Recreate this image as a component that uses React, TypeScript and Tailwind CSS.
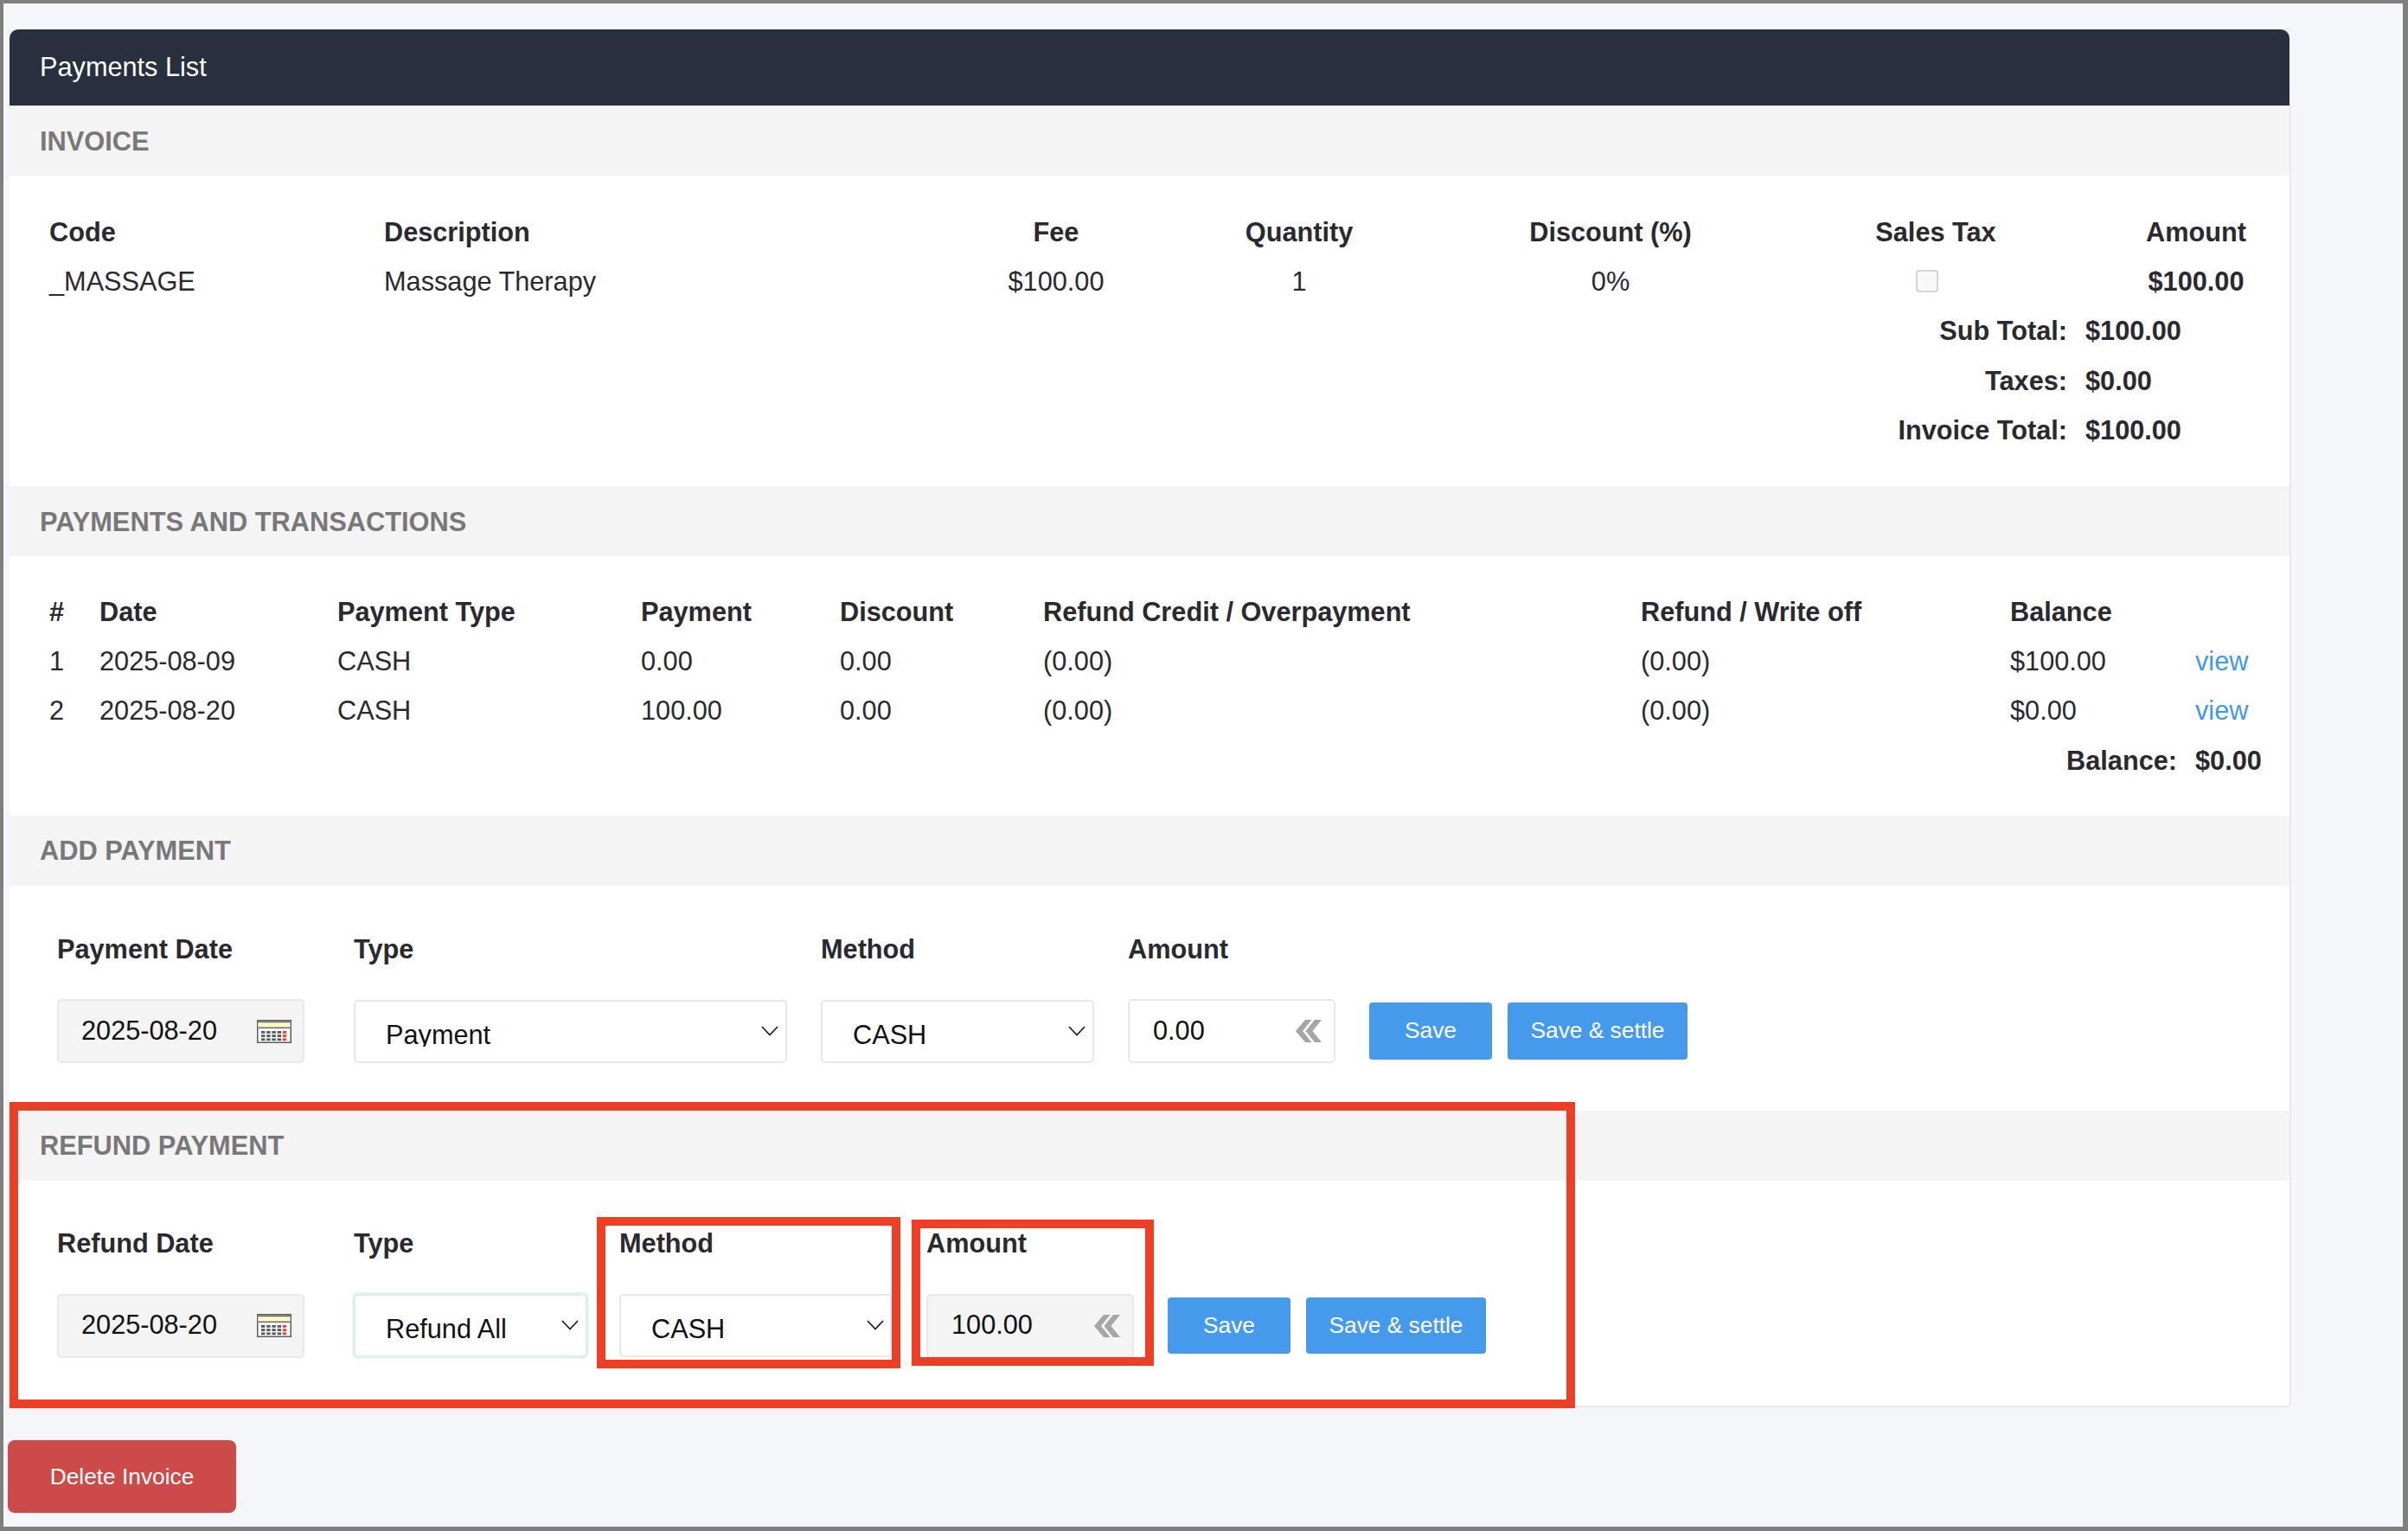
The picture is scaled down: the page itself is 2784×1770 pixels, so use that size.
const INVOICE_COLS = "grid grid-cols-[387px_702px_150px_412px_308px_444px_158px] h-[57.4px] items-center";
const PAYMENT_COLS = "grid grid-cols-[58px_275px_351px_230px_235px_691px_427px_214px_90px] h-[57.4px] items-center";

function SectionTitle({ children }: { children: string }) {
  return (
    <div className="h-[81px] bg-[#f4f4f4] pl-[35px] pt-[3px] flex items-center text-[30.800px] font-bold text-[#787878]">
      {children}
    </div>
  );
}

function CalendarIcon() {
  const cells = [];
  for (let row = 0; row < 3; row++) {
    for (let col = 0; col < 5; col++) {
      cells.push(
        <rect
          key={`${row}-${col}`}
          x={5 + col * 6.2}
          y={13 + row * 4.2}
          width="4.4"
          height="2.8"
          fill={col === 4 ? "#e8413c" : "#55585c"}
        />
      );
    }
  }
  return (
    <svg width="40" height="27" viewBox="0 0 40 27" className="shrink-0">
      <rect x="0.75" y="0.75" width="38.5" height="25.5" fill="#fff" stroke="#5b5d60" strokeWidth="1.5" />
      <rect x="1.5" y="1.5" width="37" height="2" fill="#6a6b6c" />
      <rect x="1.5" y="3.5" width="37" height="5" fill="#fdfbc0" />
      <rect x="1.5" y="8.5" width="37" height="1.5" fill="#6a6b6c" />
      {cells}
    </svg>
  );
}

function Chevrons() {
  return (
    <svg width="30" height="26" viewBox="0 0 30 26" className="shrink-0">
      <path d="M11 0h7.500L8 13l10.500 13H11L0 13z" fill="#a6a6a6" />
      <path d="M22 0h8L19.500 13 30 26h-8L11.500 13z" fill="#a6a6a6" />
    </svg>
  );
}

function DateField({ value }: { value: string }) {
  return (
    <div className="w-[286px] h-[74px] bg-[#f4f4f4] border-2 border-[#e8e8e8] rounded-[5px] pl-[26px] pr-[13px] flex items-center justify-between text-[30.700px] text-[#111]">
      <span>{value}</span>
      <CalendarIcon />
    </div>
  );
}

function SelectField({ value, width, glow }: { value: string; width: string; glow?: boolean }) {
  return (
    <div
      className={`relative h-[73px] ${width} bg-white border-2 rounded-[5px] ${
        glow ? "border-[#dcefec] ring-2 ring-[#e6f3f1]" : "border-[#e8e8e8]"
      }`}
    >
      <select
        defaultValue={value}
        className="appearance-none w-full h-full bg-transparent pl-[35px] pt-[16px] pb-[17px] text-[30.700px] text-[#111] outline-none"
      >
        <option>{value}</option>
      </select>
      <svg
        width="20"
        height="12"
        viewBox="0 0 20 12"
        fill="none"
        className="absolute right-[8px] top-[28px] pointer-events-none"
      >
        <path d="M1 1l9 9.500L19 1" stroke="#222" strokeWidth="1.800" />
      </svg>
    </div>
  );
}

function AmountField({ value, readOnly }: { value: string; readOnly?: boolean }) {
  return (
    <div
      className={`w-[240px] h-[74px] border-2 border-[#e8e8e8] rounded-[5px] pl-[27px] pr-[14px] flex items-center justify-between text-[30.700px] text-[#111] ${
        readOnly ? "bg-[#f4f4f4]" : "bg-white"
      }`}
    >
      <span>{value}</span>
      <Chevrons />
    </div>
  );
}

function BlueButton({ children, width }: { children: string; width: string }) {
  return (
    <button className={`${width} bg-[#469aec] rounded-[4px] text-white text-[26.300px] flex items-center justify-center`}>
      {children}
    </button>
  );
}

function Label({ children, width }: { children: string; width: string }) {
  return <div className={`${width} text-[30.700px] font-bold text-[#2a2a2e] h-[36px] leading-[36px] mb-[39.500px]`}>{children}</div>;
}

export default function App() {
  return (
    <div className="relative w-[2784px] h-[1770px] overflow-hidden bg-[#f4f6fa] border-t-4 border-l-4 border-r-[6px] border-b-[5px] border-[#7f7f7f] font-['Liberation_Sans',Arial,sans-serif] text-[30.700px] text-[#2a2a2e]">
      <div className="ml-[7px] mt-[30px] w-[2638px]">
        <div className="w-[2636px] h-[88px] bg-[#28303f] rounded-t-[10px] pl-[35px] pt-[1px] flex items-center text-white text-[30.700px]">
          Payments List
        </div>
        <div className="bg-white border-r-2 border-b-2 border-[#e8eaee] rounded-b-[6px]">
          <SectionTitle>INVOICE</SectionTitle>
          <div className="pl-[46px] pt-[37px] pb-[35px]">
            <div className={`${INVOICE_COLS} font-bold`}>
              <span>Code</span>
              <span>Description</span>
              <span className="text-center">Fee</span>
              <span className="text-center">Quantity</span>
              <span className="text-center">Discount (%)</span>
              <span className="text-center">Sales Tax</span>
              <span className="text-center">Amount</span>
            </div>
            <div className={INVOICE_COLS}>
              <span>_MASSAGE</span>
              <span>Massage Therapy</span>
              <span className="text-center">$100.00</span>
              <span className="text-center">1</span>
              <span className="text-center">0%</span>
              <span className="flex justify-center">
                <input
                  type="checkbox"
                  disabled
                  className="appearance-none w-[26px] h-[26px] mr-[20px] mb-[3px] bg-[#f8f8f8] border-2 border-[#d6d6d6] rounded-[4px]"
                />
              </span>
              <span className="text-center font-bold">$100.00</span>
            </div>
            {[
              ["Sub Total:", "$100.00"],
              ["Taxes:", "$0.00"],
              ["Invoice Total:", "$100.00"],
            ].map(([label, value]) => (
              <div key={label} className="flex h-[57.4px] items-center font-bold">
                <span className="w-[2333px] text-right">{label}</span>
                <span className="ml-[21px]">{value}</span>
              </div>
            ))}
          </div>

          <SectionTitle>PAYMENTS AND TRANSACTIONS</SectionTitle>
          <div className="pl-[46px] pt-[36px] pb-[34px]">
            <div className={`${PAYMENT_COLS} font-bold`}>
              <span>#</span>
              <span>Date</span>
              <span>Payment Type</span>
              <span>Payment</span>
              <span>Discount</span>
              <span>Refund Credit / Overpayment</span>
              <span>Refund / Write off</span>
              <span>Balance</span>
              <span />
            </div>
            {[
              ["1", "2025-08-09", "0.00", "$100.00"],
              ["2", "2025-08-20", "100.00", "$0.00"],
            ].map(([num, date, payment, balance]) => (
              <div key={num} className={PAYMENT_COLS}>
                <span>{num}</span>
                <span>{date}</span>
                <span>CASH</span>
                <span>{payment}</span>
                <span>0.00</span>
                <span>(0.00)</span>
                <span>(0.00)</span>
                <span>{balance}</span>
                <a className="text-[#3f9ae8]">view</a>
              </div>
            ))}
            <div className="flex h-[57.4px] items-center font-bold">
              <span className="w-[2460px] text-right">Balance:</span>
              <span className="ml-[21px]">$0.00</span>
            </div>
          </div>

          <SectionTitle>ADD PAYMENT</SectionTitle>
          <div className="h-[260px] pl-[55px] pt-[56px]">
            <div className="flex">
              <Label width="w-[343px]">Payment Date</Label>
              <Label width="w-[540px]">Type</Label>
              <Label width="w-[355px]">Method</Label>
              <Label width="w-[240px]">Amount</Label>
            </div>
            <div className="flex items-center">
              <DateField value="2025-08-20" />
              <div className="ml-[57px]">
                <SelectField value="Payment" width="w-[501px]" />
              </div>
              <div className="ml-[39px]">
                <SelectField value="CASH" width="w-[316px]" />
              </div>
              <div className="ml-[39px]">
                <AmountField value="0.00" />
              </div>
              <div className="ml-[39px] flex gap-[18px] h-[66px]">
                <BlueButton width="w-[142px]">Save</BlueButton>
                <BlueButton width="w-[208px]">Save &amp; settle</BlueButton>
              </div>
            </div>
          </div>

          <SectionTitle>REFUND PAYMENT</SectionTitle>
          <div className="h-[260px] pl-[55px] pt-[55.500px]">
            <div className="flex">
              <Label width="w-[343px]">Refund Date</Label>
              <Label width="w-[307px]">Type</Label>
              <Label width="w-[355px]">Method</Label>
              <Label width="w-[240px]">Amount</Label>
            </div>
            <div className="flex items-center">
              <DateField value="2025-08-20" />
              <div className="ml-[57px]">
                <SelectField value="Refund All" width="w-[270px]" glow />
              </div>
              <div className="ml-[37px]">
                <SelectField value="CASH" width="w-[316px]" />
              </div>
              <div className="ml-[39px]">
                <AmountField value="100.00" readOnly />
              </div>
              <div className="ml-[39px] flex gap-[18px] h-[65px]">
                <BlueButton width="w-[142px]">Save</BlueButton>
                <BlueButton width="w-[208px]">Save &amp; settle</BlueButton>
              </div>
            </div>
          </div>
        </div>
      </div>

      <button className="ml-[5px] mt-[38px] w-[264px] h-[84px] pt-[2px] bg-[#cc4a48] rounded-[8px] text-white text-[26.300px] flex items-center justify-center">
        Delete Invoice
      </button>

      {/* annotation boxes drawn over the page */}
      <div className="absolute left-[7px] top-[1270px] w-[1810px] h-[354px] border-[10px] border-[#ec3f26] pointer-events-none" />
      <div className="absolute left-[686px] top-[1403px] w-[351px] h-[175px] border-[10px] border-[#ec3f26] pointer-events-none" />
      <div className="absolute left-[1050px] top-[1406px] w-[280px] h-[169px] border-[10px] border-[#ec3f26] pointer-events-none" />
    </div>
  );
}
